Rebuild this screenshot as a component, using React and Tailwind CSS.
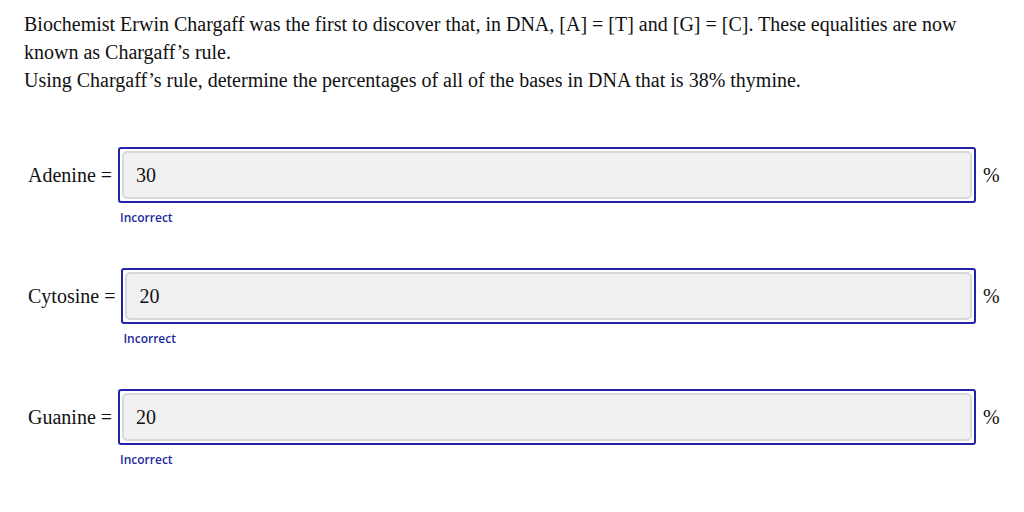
export default function App() {
  const rows = [
    { label: "Adenine", value: "30" },
    { label: "Cytosine", value: "20" },
    { label: "Guanine", value: "20" },
  ];

  return (
    <div className="w-[1024px] h-[512px] bg-white overflow-hidden font-['Liberation_Serif',serif] text-[#111]">
      <div className="pl-[24px] pt-[10px] text-[20px] leading-[28px]">
        <p>
          Biochemist Erwin Chargaff was the first to discover that, in DNA, [A] = [T] and [G] = [C]. These equalities are now
          <br />
          known as Chargaff’s rule.
        </p>
        <p>Using Chargaff’s rule, determine the percentages of all of the bases in DNA that is 38% thymine.</p>
      </div>

      <div className="mt-[53px] pl-[28px] pr-[27px] flex flex-col">
        {rows.map((row) => (
          <div key={row.label} className="h-[121px]">
            <div className="flex items-center h-[56px]">
              <span className="text-[20px] leading-[28px] mr-[6px] whitespace-nowrap">{row.label} =</span>
              <div className="flex-1 h-[56px] border-2 border-[#2323a8] rounded-[3px] p-[2px]">
                <div className="h-full bg-[#f1f1f1] border-2 border-[#d8d8d8] rounded-[5px] flex items-center pl-[12px] text-[20px]">
                  {row.value}
                </div>
              </div>
              <span className="ml-[7px] w-[14px] text-[20px]">%</span>
            </div>
            <div className="flex">
              <span className="invisible text-[20px] leading-[20px] h-0 mr-[6px] whitespace-nowrap">{row.label} =</span>
              <span className="mt-[7px] ml-[2px] text-[12px] leading-[16px] font-semibold font-['Open_Sans',sans-serif] text-[#1c2a9c]">
                Incorrect
              </span>
            </div>
          </div>
        ))}
      </div>
    </div>
  );
}
